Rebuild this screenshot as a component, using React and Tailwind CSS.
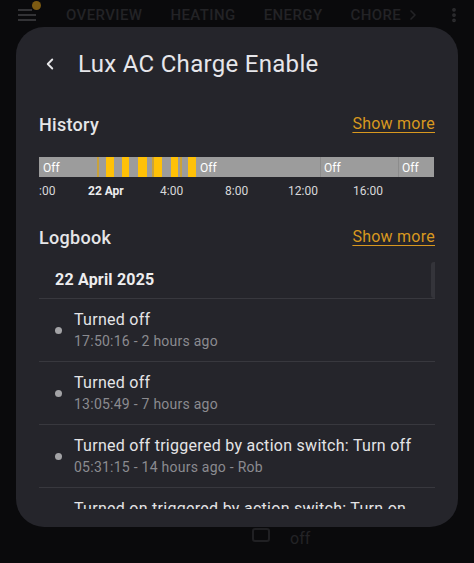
import { ChevronLeft, ChevronRight, EllipsisVertical } from "lucide-react";

const segments = [
  { l: 97, w: 1.5, thin: true },
  { l: 106, w: 8 },
  { l: 122, w: 7 },
  { l: 138, w: 9 },
  { l: 152, w: 1.5, thin: true },
  { l: 154, w: 8 },
  { l: 171, w: 7 },
  { l: 180, w: 1.5, thin: true },
  { l: 188, w: 8 },
];

const axis = [
  { x: 39, label: ":00" },
  { x: 88, label: "22 Apr", bold: true },
  { x: 160, label: "4:00" },
  { x: 225, label: "8:00" },
  { x: 288, label: "12:00" },
  { x: 353, label: "16:00" },
];

const entries = [
  { title: "Turned off", sub: "17:50:16 - 2 hours ago" },
  { title: "Turned off", sub: "13:05:49 - 7 hours ago" },
  { title: "Turned off triggered by action switch: Turn off", sub: "05:31:15 - 14 hours ago - Rob" },
  { title: "Turned on triggered by action switch: Turn on", sub: "05:20:02 - 14 hours ago - Rob" },
];

function SectionHeading({ title }) {
  return (
    <div className="flex h-[28px] items-center justify-between px-[23px]">
      <span className="text-[18px] font-medium tracking-[0.3px] text-[#e6e6e8]">{title}</span>
      <span className="text-[16px] tracking-[0.25px] text-[#d8981f] underline underline-offset-[3px]">Show more</span>
    </div>
  );
}

function Timeline() {
  // bar spans 39..434 on the page, dialog left is 16
  return (
    <div className="px-[23px]">
      <div className="relative mt-[19px] h-[20px] w-[395px] bg-[#9c9c9c] text-[12px] text-white">
        {segments.map((s, i) => (
          <div
            key={i}
            className={`absolute top-0 h-full ${s.thin ? "bg-[#c9a23a]" : "bg-[#ffc107]"}`}
            style={{ left: s.l - 39, width: s.w }}
          />
        ))}
        <div className="absolute left-[281px] top-0 h-full w-px bg-[#8c8c8c]" />
        <div className="absolute left-[359px] top-0 h-full w-px bg-[#8c8c8c]" />
        <span className="absolute left-[4px] top-[2px]">Off</span>
        <span className="absolute left-[161px] top-[2px]">Off</span>
        <span className="absolute left-[285px] top-[2px]">Off</span>
        <span className="absolute left-[363px] top-[2px]">Off</span>
      </div>
      <div className="relative mt-[5px] h-[16px] text-[12px] text-[#d8d8da]">
        {axis.map((a) => (
          <span
            key={a.label}
            className={`absolute top-0 ${a.bold ? "font-bold text-[#ececee]" : ""}`}
            style={{ left: a.x - 39 }}
          >
            {a.label}
          </span>
        ))}
      </div>
    </div>
  );
}

function Logbook() {
  return (
    <div className="relative mx-[23px] mt-[11px] h-[247px] overflow-hidden">
      <div className="absolute right-[-2px] top-0 h-[36px] w-[6px] rounded-full bg-[#34343a]" />
      <div className="flex h-[37px] items-center border-b border-[#38383e] pl-[16px] text-[16px] font-bold tracking-[0.2px] text-[#ededef]">
        22 April 2025
      </div>
      {entries.map((e, i) => (
        <div key={i} className="flex h-[63px] items-center border-b border-[#38383e]">
          <div className="ml-[16px] mr-[12px] h-[7px] w-[7px] shrink-0 rounded-full bg-[#a3a3a6]" />
          <div className="flex flex-col">
            <span className="whitespace-nowrap text-[16px] leading-[23px] tracking-[0.28px] text-[#e4e4e6]">{e.title}</span>
            <span className="whitespace-nowrap text-[14px] leading-[21px] tracking-[0.25px] text-[#8b8b90]">{e.sub}</span>
          </div>
        </div>
      ))}
    </div>
  );
}

export default function App() {
  return (
    <div
      className="relative h-[563px] w-[474px] overflow-hidden bg-[#0a0a0c]"
      style={{ fontFamily: "Roboto, 'Liberation Sans', sans-serif" }}
    >
      {/* dimmed app bar behind the dialog */}
      <div className="flex h-[30px] items-center text-[15px] font-medium tracking-[0.4px] text-[#232326]">
        <div className="relative ml-[18px] mr-[30px] flex w-[18px] flex-col gap-[3px]">
          <div className="h-[2px] w-[14px] bg-[#333336]" />
          <div className="h-[2px] w-[18px] bg-[#333336]" />
          <div className="h-[2px] w-[18px] bg-[#333336]" />
          <div className="absolute left-[14px] top-[-8px] h-[9px] w-[9px] rounded-full bg-[#7c5a12]" />
        </div>
        <span>OVERVIEW</span>
        <span className="ml-[28px]">HEATING</span>
        <span className="ml-[28px]">ENERGY</span>
        <span className="ml-[28px]">CHORE</span>
        <ChevronRight className="ml-[4px] h-[16px] w-[16px]" strokeWidth={2.5} />
        <EllipsisVertical className="ml-[24px] h-[18px] w-[18px] text-[#2e2e31]" strokeWidth={3} />
      </div>
      <div className="absolute left-[290px] top-[527px] text-[16px] text-[#232326]">off</div>
      <div className="absolute left-[252px] top-[528px] h-[14px] w-[18px] rounded-[3px] border-2 border-[#202023]" />

      {/* dialog */}
      <div className="absolute left-[16px] top-[27px] h-[500px] w-[442px] overflow-hidden rounded-[28px] bg-[#25252b]">
        <div className="flex h-[73px] items-center">
          <ChevronLeft className="ml-[25px] h-[18px] w-[18px] text-[#e6e6e8]" strokeWidth={2.5} />
          <span className="ml-[19px] text-[24px] tracking-[0.3px] text-[#e6e6ea]">Lux AC Charge Enable</span>
        </div>
        <div className="mt-[10px]">
          <SectionHeading title="History" />
        </div>
        <Timeline />
        <div className="mt-[25px]">
          <SectionHeading title="Logbook" />
        </div>
        <Logbook />
      </div>
    </div>
  );
}
